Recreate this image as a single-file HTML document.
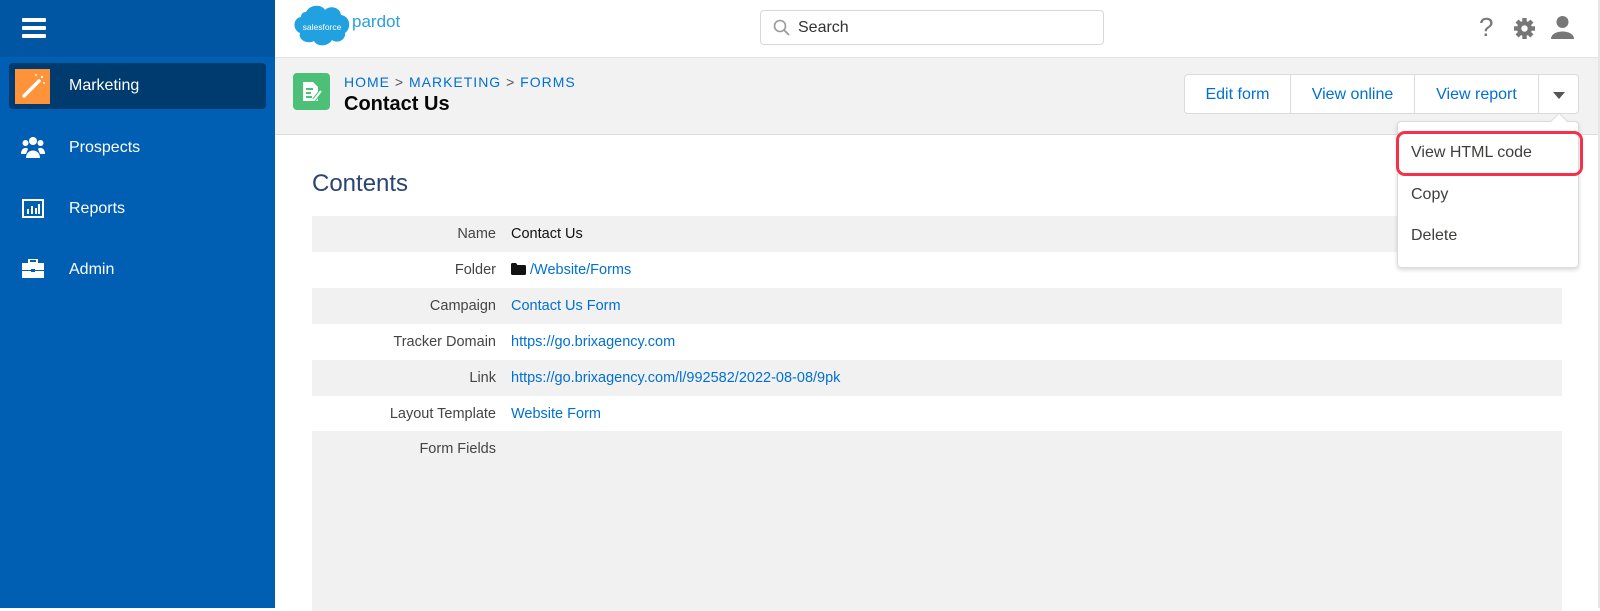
<!DOCTYPE html>
<html><head><meta charset="utf-8"><style>
*{margin:0;padding:0;box-sizing:border-box}
body{width:1600px;height:608px;overflow:hidden;font-family:"Liberation Sans",sans-serif;background:#fff;position:relative}
.abs{position:absolute}
#side{left:0;top:0;width:275px;height:608px;background:#005fb2}
#sidetop{left:0;top:0;width:275px;height:57px;background:#0056a3}
.ham{left:22px;width:24px;height:4px;background:#fff;border-radius:1px}
.nav{left:69px;color:#fff;font-size:16px}
#hdr{left:275px;top:0;width:1323px;height:57px;background:#fff}
#band{left:275px;top:57px;width:1323px;height:78px;background:#f2f2f2;border-top:1px solid #e4e4e4;border-bottom:1px solid #dcdcdc}
.row{left:312px;width:1250px;height:36px}
.g{background:#f1f1f1}
.lab{position:absolute;right:1066px;top:10px;font-size:14.5px;color:#444;white-space:nowrap}
.val{position:absolute;left:199px;top:10px;font-size:14.5px;color:#0070d2;white-space:nowrap}
.btn{top:0;height:40px;color:#0070d2;font-size:16px;line-height:40px;text-align:center;border-right:1px solid #dddbda}
.mi{left:1411px;font-size:16px;color:#3e3e3c}
</style></head><body>
<div id="side" class="abs"></div>
<div id="sidetop" class="abs"></div>
<div class="abs ham" style="top:18px"></div>
<div class="abs ham" style="top:26px"></div>
<div class="abs ham" style="top:34px"></div>
<div class="abs" style="left:9px;top:63px;width:257px;height:46px;background:#003b70;border-radius:4px"></div>
<div class="abs" style="left:15px;top:69px;width:35px;height:35px;background:#fe9339"></div>
<svg class="abs" style="left:15px;top:69px" width="35" height="35"><path d="M9 27 L24 12" stroke="#fff" stroke-width="3.5" stroke-linecap="round"/><circle cx="27" cy="8" r="1.2" fill="#fff"/><circle cx="21" cy="6" r="1" fill="#fff"/><circle cx="29" cy="14" r="1" fill="#fff"/></svg>
<div class="abs nav" style="top:77px">Marketing</div>
<svg class="abs" style="left:21px;top:136px" width="24" height="22" fill="#fff"><circle cx="12" cy="5" r="4"/><circle cx="4.5" cy="7" r="3"/><circle cx="19.5" cy="7" r="3"/><path d="M5 22 C5 12 19 12 19 22Z"/><path d="M0 18 C0 11 6 11 7 13 L5 18Z"/><path d="M24 18 C24 11 18 11 17 13 L19 18Z"/></svg>
<div class="abs nav" style="top:139px">Prospects</div>
<svg class="abs" style="left:22px;top:199px" width="22" height="19"><rect x="1" y="1" width="20" height="17" fill="none" stroke="#fff" stroke-width="2"/><rect x="5" y="10" width="2" height="5" fill="#fff"/><rect x="9" y="7" width="2" height="8" fill="#fff"/><rect x="13" y="9" width="2" height="6" fill="#fff"/><rect x="16" y="5" width="2" height="10" fill="#fff"/></svg>
<div class="abs nav" style="top:200px">Reports</div>
<svg class="abs" style="left:22px;top:259px" width="22" height="19" fill="#fff"><rect x="7" y="0" width="8" height="4" fill="none" stroke="#fff" stroke-width="2"/><rect x="0" y="4" width="22" height="7"/><rect x="0" y="12" width="22" height="7"/><rect x="9" y="10" width="4" height="3" fill="#005fb2"/></svg>
<div class="abs nav" style="top:261px">Admin</div>

<div id="hdr" class="abs"></div>
<svg class="abs" style="left:292px;top:4px" width="60" height="42"><path d="M14 8 C18 0 30 0 33 6 C38 1 48 3 49 11 C58 12 60 24 53 29 C54 36 45 40 40 36 C36 43 25 43 22 37 C14 41 6 35 8 29 C0 26 1 14 9 13 C9 10 11 8 14 8Z" fill="#22a1e0"/><text x="30" y="26" font-size="8.5" fill="#fff" text-anchor="middle" font-family="Liberation Sans">salesforce</text></svg>
<div class="abs" style="left:352px;top:12px;font-size:17px;color:#2aa0dc">pardot</div>
<div class="abs" style="left:760px;top:10px;width:344px;height:35px;border:1px solid #d8d8d8;border-radius:4px;background:#fff"></div>
<svg class="abs" style="left:773px;top:19px" width="18" height="18"><circle cx="7" cy="7" r="5.5" fill="none" stroke="#999" stroke-width="1.6"/><path d="M11 11 L16 16" stroke="#999" stroke-width="1.8"/></svg>
<div class="abs" style="left:798px;top:19px;font-size:16px;color:#333">Search</div>
<div class="abs" style="left:1479px;top:12px;font-size:26px;color:#777">?</div>
<svg class="abs" style="left:1514px;top:18px" width="21" height="21"><g transform="translate(10.5 10.5)" fill="#777"><circle r="7.5"/><g id="t"><rect x="-2.2" y="-10.5" width="4.4" height="5"/></g><use href="#t" transform="rotate(45)"/><use href="#t" transform="rotate(90)"/><use href="#t" transform="rotate(135)"/><use href="#t" transform="rotate(180)"/><use href="#t" transform="rotate(225)"/><use href="#t" transform="rotate(270)"/><use href="#t" transform="rotate(315)"/><circle r="3.2" fill="#fff"/></g></svg>
<svg class="abs" style="left:1551px;top:15px" width="23" height="24" fill="#777"><circle cx="11.5" cy="7" r="6"/><path d="M0 24 C0 14 23 14 23 24Z"/></svg>

<div id="band" class="abs"></div>
<div class="abs" style="left:293px;top:73px;width:37px;height:37px;background:#4bc076;border-radius:4px"></div>
<svg class="abs" style="left:293px;top:73px" width="37" height="37"><path d="M10 9 H20 L25 14 V28 H10Z" fill="#fff"/><rect x="13" y="15" width="7" height="2" fill="#4bc076"/><rect x="13" y="19" width="5" height="2" fill="#4bc076"/><rect x="13" y="23" width="6" height="2" fill="#4bc076"/><path d="M21 27 L28 18" stroke="#4bc076" stroke-width="4"/><path d="M21 27 L28 18" stroke="#fff" stroke-width="2"/></svg>
<div class="abs" style="left:344px;top:74px;font-size:14px;color:#0070d2;letter-spacing:1px">HOME <span style="color:#555">&gt;</span> MARKETING <span style="color:#555">&gt;</span> FORMS</div>
<div class="abs" style="left:344px;top:93px;font-size:20px;font-weight:bold;color:#080707">Contact Us</div>

<div class="abs" style="left:1184px;top:74px;width:395px;height:40px;background:#fff;border:1px solid #dddbda;border-radius:4px;overflow:hidden">
<div class="abs btn" style="left:0;width:106px">Edit form</div>
<div class="abs btn" style="left:106px;width:124px">View online</div>
<div class="abs btn" style="left:230px;width:124px">View report</div>
<div class="abs" style="left:368px;top:17px;width:0;height:0;border-left:6px solid transparent;border-right:6px solid transparent;border-top:7px solid #555"></div>
</div>

<div class="abs" style="left:312px;top:170px;font-size:24px;color:#2b4470">Contents</div>
<div class="abs row g" style="top:216px"><span class="lab">Name</span><span class="val" style="color:#111">Contact Us</span></div>
<div class="abs row" style="top:252px"><span class="lab">Folder</span><span class="val"><svg width="15" height="12" style="margin-right:4px;vertical-align:-1px"><path d="M0 1.5 Q0 0 1.5 0 H5 L6.5 2 H13.5 Q15 2 15 3.5 V10.5 Q15 12 13.5 12 H1.5 Q0 12 0 10.5Z" fill="#111"/></svg>/Website/Forms</span></div>
<div class="abs row g" style="top:288px"><span class="lab">Campaign</span><span class="val">Contact Us Form</span></div>
<div class="abs row" style="top:324px"><span class="lab">Tracker Domain</span><span class="val">https://go.brixagency.com</span></div>
<div class="abs row g" style="top:360px"><span class="lab">Link</span><span class="val">https://go.brixagency.com/l/992582/2022-08-08/9pk</span></div>
<div class="abs row" style="top:396px"><span class="lab">Layout Template</span><span class="val">Website Form</span></div>
<div class="abs row g" style="top:431px;height:180px"><span class="lab">Form Fields</span></div>

<div class="abs" style="left:1598px;top:0;width:2px;height:608px;background:#e6e6e6"></div>

<div class="abs" style="left:1397px;top:121px;width:182px;height:147px;background:#fff;border:1px solid #dddbda;border-radius:4px;box-shadow:0 2px 4px rgba(0,0,0,.15)"></div>
<div class="abs" style="left:1553px;top:115px;width:12px;height:12px;background:#fff;border-left:1px solid #dddbda;border-top:1px solid #dddbda;transform:rotate(45deg)"></div>
<div class="abs" style="left:1396px;top:131px;width:187px;height:45px;border:3px solid #f7304a;border-radius:9px"></div>
<div class="abs mi" style="top:144px">View HTML code</div>
<div class="abs mi" style="top:186px">Copy</div>
<div class="abs mi" style="top:227px">Delete</div>
</body></html>
